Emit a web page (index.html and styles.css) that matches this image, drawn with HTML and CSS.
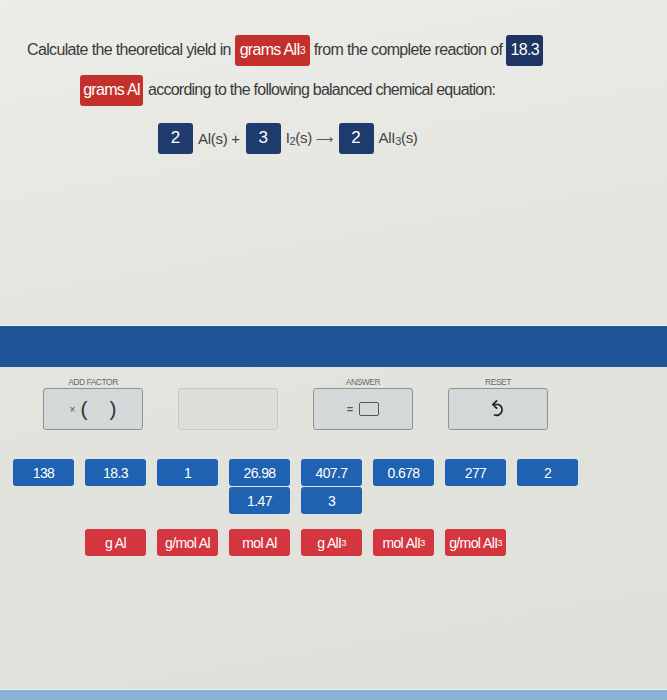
FILE: index.html
```html
<!DOCTYPE html>
<html>
<head>
<meta charset="utf-8">
<link rel="stylesheet" href="styles.css">
</head>
<body>
<div class="page">
  <div class="question">
    <div class="line line1">
      <span class="txt">Calculate the theoretical yield in</span>
      <span class="badge red">grams AlI<sub>3</sub></span>
      <span class="txt">from the complete reaction of</span>
      <span class="badge navy">18.3</span>
    </div>
    <div class="line line2">
      <span class="badge red">grams Al</span>
      <span class="txt">according to the following balanced chemical equation:</span>
    </div>
    <div class="equation">
      <span class="coef">2</span><span class="species">Al(s) +</span>
      <span class="coef">3</span><span class="species">I<sub>2</sub>(s) <span class="arrow">&#10230;</span></span>
      <span class="coef">2</span><span class="species">AlI<sub>3</sub>(s)</span>
    </div>
  </div>

  <div class="bluebar"></div>

  <div class="tools">
    <div class="tool">
      <div class="label">ADD FACTOR</div>
      <div class="box"><span class="times">&#215;</span><span class="paren">(</span><span class="paren gap">)</span></div>
    </div>
    <div class="tool">
      <div class="label">&nbsp;</div>
      <div class="box empty"></div>
    </div>
    <div class="tool">
      <div class="label">ANSWER</div>
      <div class="box"><span class="eq">=</span><span class="ansbox"></span></div>
    </div>
    <div class="tool">
      <div class="label">RESET</div>
      <div class="box">
        <svg width="18" height="22" viewBox="0 0 18 22" class="reset">
          <path d="M4 6.5 H9.5 A5.5 5.5 0 1 1 5.5 17" fill="none" stroke="#222" stroke-width="1.7" stroke-linecap="round"/>
          <path d="M7.6 2.8 L3.9 6.5 L7.6 10.2" fill="none" stroke="#222" stroke-width="1.7" stroke-linecap="round" stroke-linejoin="round"/>
        </svg>
      </div>
    </div>
  </div>

  <div class="tiles">
    <div class="tile blue">138</div>
    <div class="tile blue">18.3</div>
    <div class="tile blue">1</div>
    <div class="tile blue">26.98</div>
    <div class="tile blue">407.7</div>
    <div class="tile blue">0.678</div>
    <div class="tile blue">277</div>
    <div class="tile blue">2</div>
    <div class="tile blue c4">1.47</div>
    <div class="tile blue">3</div>
  </div>
  <div class="tiles units">
    <div class="tile redt c2">g Al</div>
    <div class="tile redt">g/mol Al</div>
    <div class="tile redt">mol Al</div>
    <div class="tile redt">g AlI<sub>3</sub></div>
    <div class="tile redt">mol AlI<sub>3</sub></div>
    <div class="tile redt">g/mol AlI<sub>3</sub></div>
  </div>

  <div class="spacer"></div>
  <div class="footer"></div>
</div>
</body>
</html>
```

FILE: styles.css
```css
html, body {
  margin: 0;
  padding: 0;
}
body {
  background: #e3e3de;
  font-family: "Liberation Sans", Arial, sans-serif;
  color: #333;
}
.page {
  width: 667px;
  height: 700px;
  display: flex;
  flex-direction: column;
  background: linear-gradient(170deg, #ecece8 0%, #e4e4df 45%, #dfe0da 100%);
}
.question {
  padding: 32px 0 0 27px;
  height: 294px;
  box-sizing: border-box;
}
.line {
  display: flex;
  align-items: center;
  font-size: 16px;
  letter-spacing: -0.65px;
  color: #3a3a3a;
}
.line1 { height: 36px; }
.line2 { height: 36px; margin-left: 53px; margin-top: 4px; }
.txt { margin: 0 4px; }
.line1 .txt:first-child { margin-left: 0; }
.line2 .txt { margin-left: 5px; letter-spacing: -0.75px; }
.badge {
  display: inline-flex;
  align-items: center;
  justify-content: center;
  color: #fff;
  height: 31px;
  padding: 0 4px;
  border-radius: 3px;
  font-size: 16px;
  letter-spacing: -0.7px;
}
.badge sub { font-size: 10px; vertical-align: -2px; }
.red { background: #c4312c; }
.navy { background: #1f3464; width: 37px; padding: 0; }
.line1 .red { width: 75px; padding: 0; }
.line2 .red { width: 63px; padding: 0; }
.equation {
  display: flex;
  align-items: center;
  margin: 14px 0 0 131px;
  height: 32px;
}
.coef {
  display: inline-flex;
  align-items: center;
  justify-content: center;
  width: 35px;
  height: 31px;
  background: #1f3a6c;
  color: #fff;
  border-radius: 3px;
  font-size: 17px;
}
.species {
  font-size: 15px;
  color: #444;
  margin: 0 6px 0 5px;
  letter-spacing: -0.3px;
}
.species sub { font-size: 11px; vertical-align: -2px; }
.arrow { font-size: 12px; color: #555; }
.bluebar {
  height: 41px;
  margin-top: 32px;
  background: #1e5498;
  box-shadow: 0 -1px 0 #f2f4f6;
}
.tools {
  display: flex;
  gap: 35px;
  padding-left: 43px;
  margin-top: 9px;
}
.tool {
  width: 100px;
  display: flex;
  flex-direction: column;
  align-items: center;
}
.label {
  font-size: 8.5px;
  color: #6a6a6a;
  letter-spacing: -0.5px;
  height: 12px;
  line-height: 12px;
}
.box {
  width: 100px;
  height: 42px;
  box-sizing: border-box;
  border: 1.5px solid #8c9494;
  border-radius: 3px;
  background: #d4d8d8;
  display: flex;
  align-items: center;
  justify-content: center;
}
.box.empty {
  background: #dcdeda;
  border-color: #c4c8c6;
}
.times { font-size: 10px; color: #555; margin-right: 5px; }
.paren { font-size: 21px; color: #333; }
.paren.gap { margin-left: 22px; }
.eq { font-size: 11px; color: #555; margin-right: 6px; font-weight: bold; }
.ansbox {
  width: 18px;
  height: 12px;
  border: 1.5px solid #555;
  border-radius: 2px;
}
.reset { display: block; }
.tiles {
  display: grid;
  grid-template-columns: repeat(8, 61px);
  column-gap: 11px;
  row-gap: 1px;
  padding-left: 13px;
  margin-top: 29px;
}
.tiles.units { margin-top: 15px; }
.tile {
  height: 27px;
  border-radius: 3px;
  color: #fff;
  font-size: 14px;
  letter-spacing: -0.6px;
  display: flex;
  align-items: center;
  justify-content: center;
}
.tile sub { font-size: 9px; vertical-align: -2px; }
.blue { background: #1f62b2; }
.redt { background: #d4363f; }
.c4 { grid-column-start: 4; }
.c2 { grid-column-start: 2; }
.spacer { flex: 1; }
.footer {
  height: 10px;
  background: #8cb1d6;
  box-shadow: 0 -1px 0 #eef2f4;
}
```
